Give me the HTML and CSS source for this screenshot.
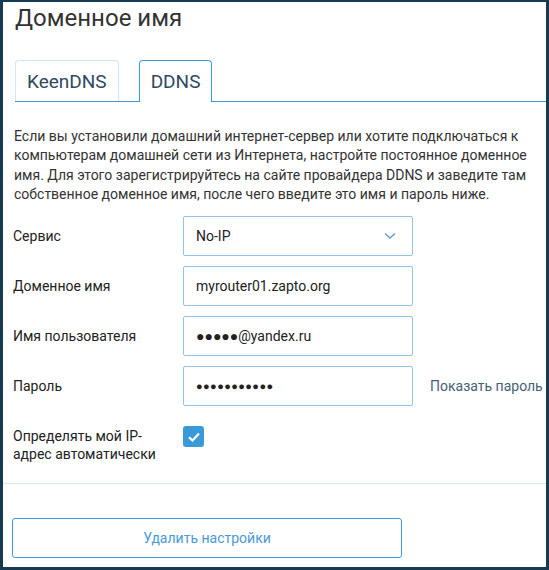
FILE: index.html
```html
<!DOCTYPE html>
<html lang="ru">
<head>
    <meta charset="UTF-8">
    <meta name="viewport" content="width=device-width, initial-scale=1.0">
    <title>Доменное имя</title>
    <link rel="stylesheet" href="styles.css">
</head>
<body>
    <div class="panel">
        <div class="section">
            <h1>Доменное имя</h1>

            <div class="tabs">
                <div class="tab">KeenDNS</div>
                <div class="tab active">DDNS</div>
            </div>

            <p class="hint">Если вы установили домашний интернет-сервер или хотите подключаться к компьютерам домашней сети из Интернета, настройте постоянное доменное имя. Для этого зарегистрируйтесь на сайте провайдера DDNS и заведите там собственное доменное имя, после чего введите это имя и пароль ниже.</p>

            <div class="form-row">
                <label for="service">Сервис</label>
                <div class="select">
                    <span>No-IP</span>
                    <svg width="12" height="8" viewBox="0 0 12 8"><path d="M1 1.5 L6 6 L11 1.5" fill="none" stroke="#6a9fcf" stroke-width="1.5"/></svg>
                </div>
            </div>

            <div class="form-row">
                <label for="domain">Доменное имя</label>
                <input type="text" id="domain" value="myrouter01.zapto.org">
            </div>

            <div class="form-row">
                <label for="user">Имя пользователя</label>
                <input type="text" id="user" value="●●●●●@yandex.ru">
            </div>

            <div class="form-row">
                <label for="password">Пароль</label>
                <input type="text" id="password" class="dots" value="●●●●●●●●●●●">
                <a class="show-pass">Показать пароль</a>
            </div>

            <div class="form-row check-row">
                <label>Определять мой IP-адрес автоматически</label>
                <span class="checkbox">
                    <svg width="14" height="12" viewBox="0 0 14 12"><path d="M2 6.2 L5.5 9.5 L12 2.5" fill="none" stroke="#fff" stroke-width="2.2"/></svg>
                </span>
            </div>
        </div>

        <div class="footer">
            <button>Удалить настройки</button>
        </div>
    </div>
</body>
</html>
```

FILE: styles.css
```css
html, body {
    margin: 0;
    padding: 0;
}
body {
    font-family: Roboto, "Noto Sans", sans-serif;
    color: #333;
    background-color: #163a52;
}
.panel {
    width: 543px;
    height: 565px;
    background-color: white;
    margin: 2px 3px 0 3px;
    display: flex;
    flex-direction: column;
}
.section {
    padding: 0 0 20px 10px;
    border-bottom: 1px solid #d3e8f5;
}
h1 {
    margin: 1px 0 0 2px;
    font-size: 24px;
    font-weight: normal;
    line-height: 30px;
    color: #333;
}
.tabs {
    display: flex;
    gap: 20px;
    margin: 27px 0 0 2px;
    padding-left: 0;
    border-bottom: 1px solid #3d9ad9;
}
.tab {
    height: 40px;
    padding: 0 11px;
    border: 1px solid #d1e7f6;
    border-bottom: none;
    border-radius: 4px 4px 0 0;
    font-size: 19px;
    line-height: 42px;
    color: #2f4a5f;
}
.tab.active {
    border-color: #3d9ad9;
    background-color: white;
    margin-bottom: -1px;
    height: 41px;
}
.hint {
    margin: 25px 15px 12px 1px;
    font-size: 14px;
    line-height: 19.3px;
    color: #333;
}
.form-row {
    display: flex;
    align-items: center;
    margin-bottom: 10px;
}
.form-row label {
    width: 170px;
    flex-shrink: 0;
    font-size: 14px;
    color: #222;
}
input, .select {
    width: 230px;
    height: 40px;
    padding: 0 12px;
    border: 1px solid #90c4e8;
    border-radius: 2px;
    box-sizing: border-box;
    font-family: Roboto, "Noto Sans", sans-serif;
    font-size: 14px;
    color: #222;
    background: white;
}
.select {
    display: flex;
    align-items: center;
    justify-content: space-between;
}
.select svg {
    margin-right: 4px;
}
input.dots {
    font-size: 11px;
    letter-spacing: 0.4px;
}
.show-pass {
    margin-left: 17px;
    font-size: 14px;
    color: #466175;
    white-space: nowrap;
}
.check-row {
    margin-top: 20px;
    align-items: flex-start;
    margin-bottom: 0;
}
.check-row label {
    width: 155px;
    margin-right: 15px;
    line-height: 18px;
    margin-top: 1px;
}
.checkbox {
    width: 21px;
    height: 21px;
    border-radius: 3px;
    background-color: #3a9ad9;
    display: flex;
    align-items: center;
    justify-content: center;
}
.footer {
    padding: 34px 0 0 9px;
}
button {
    width: 390px;
    height: 40px;
    background-color: white;
    border: 1px solid #3d9ad9;
    border-radius: 3px;
    font-family: Roboto, "Noto Sans", sans-serif;
    font-size: 14px;
    color: #4a9ad9;
    cursor: pointer;
}
```
